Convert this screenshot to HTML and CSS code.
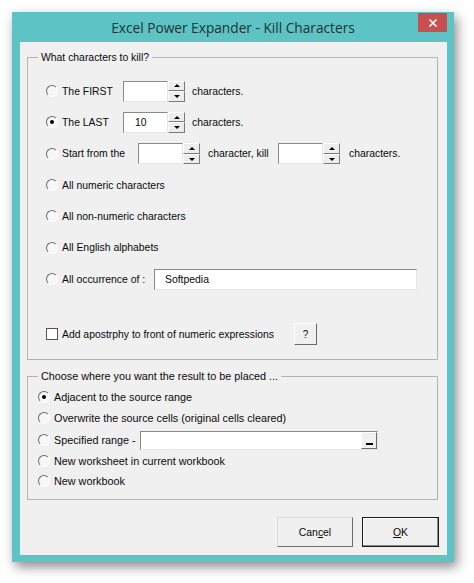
FILE: index.html
```html
<!DOCTYPE html>
<html>
<head>
<meta charset="utf-8">
<link rel="stylesheet" href="styles.css">
</head>
<body>
<div class="window">
  <div class="titlebar">
    <span class="title">Excel Power Expander - Kill Characters</span>
    <div class="close"><svg width="10" height="10" viewBox="0 0 10 10"><path d="M1.5 1.5 L8.5 8.5 M8.5 1.5 L1.5 8.5" stroke="#fff" stroke-width="1.6" fill="none"/></svg></div>
  </div>
  <div class="client">
    <div class="group g1">
      <span class="legend">What characters to kill?</span>
      <div class="row">
        <span class="radio"></span><span class="lbl w61">The FIRST</span>
        <span class="field"></span><span class="spinbtns"><span class="up"></span><span class="down"></span></span>
        <span class="after">characters.</span>
      </div>
      <div class="row">
        <span class="radio on"></span><span class="lbl w61">The LAST</span>
        <span class="field"><span class="val">10</span></span><span class="spinbtns"><span class="up"></span><span class="down"></span></span>
        <span class="after">characters.</span>
      </div>
      <div class="row">
        <span class="radio"></span><span class="lbl w76">Start from the</span>
        <span class="field"></span><span class="spinbtns"><span class="up"></span><span class="down"></span></span>
        <span class="after mid">character, kill</span>
        <span class="field"></span><span class="spinbtns"><span class="up"></span><span class="down"></span></span>
        <span class="after last">characters.</span>
      </div>
      <div class="row"><span class="radio"></span><span class="lbl">All numeric characters</span></div>
      <div class="row"><span class="radio"></span><span class="lbl">All non-numeric characters</span></div>
      <div class="row"><span class="radio"></span><span class="lbl">All English alphabets</span></div>
      <div class="row">
        <span class="radio"></span><span class="lbl w92">All occurrence of :</span>
        <span class="textbox">Softpedia</span>
      </div>
      <div class="checkrow">
        <span class="check"></span><span class="lbl w232">Add apostrphy to front of numeric expressions</span>
        <span class="qbtn">?</span>
      </div>
    </div>

    <div class="group g2">
      <span class="legend">Choose where you want the result to be placed ...</span>
      <div class="row2"><span class="radio on"></span><span class="lbl">Adjacent to the source range</span></div>
      <div class="row2 tall"><span class="radio"></span><span class="lbl">Overwrite the source cells (original cells cleared)</span></div>
      <div class="row2 tall">
        <span class="radio"></span><span class="lbl w87">Specified range -</span>
        <span class="rangebox"><span class="pick"><span class="bar"></span></span></span>
      </div>
      <div class="row2"><span class="radio"></span><span class="lbl">New worksheet in current workbook</span></div>
      <div class="row2"><span class="radio"></span><span class="lbl">New workbook</span></div>
    </div>

    <div class="buttons">
      <span class="btn">Can<u>c</u>el</span>
      <span class="btn default"><u>O</u>K</span>
    </div>
  </div>
</div>
</body>
</html>
```

FILE: styles.css
```css
html, body {
  margin: 0;
  background: #ffffff;
}
body {
  font-family: "Liberation Sans", Arial, sans-serif;
  font-size: 10.4px;
  color: #0a0a0a;
  width: 474px;
  height: 583px;
  overflow: hidden;
}
.window {
  margin: 12px 0 0 12px;
  width: 442px;
  height: 550px;
  background: #5ec3c4;
  box-shadow: 3px 5px 11px rgba(0, 0, 0, 0.45);
  display: flex;
  flex-direction: column;
}
.titlebar {
  height: 30px;
  position: relative;
  display: flex;
  align-items: center;
  justify-content: center;
  font-family: "Open Sans", "Noto Sans", sans-serif;
  font-size: 13.7px;
  color: #1d3434;
}
.title {
  margin-top: 1px;
}
.close {
  position: absolute;
  top: 1px;
  right: 7px;
  width: 29px;
  height: 19px;
  background: #c74f4f;
  display: flex;
  align-items: center;
  justify-content: center;
}
.client {
  flex: 1;
  margin: 0 7px 7px 8px;
  background: #f0f0f0;
  display: flex;
  flex-direction: column;
  padding: 15px 9px 0 7px;
}
.group {
  position: relative;
  border: 1px solid #b4b4b4;
  box-sizing: border-box;
}
.legend {
  position: absolute;
  top: -8px;
  left: 10px;
  padding: 0 3px;
  background: #f0f0f0;
  line-height: 15px;
}
.g1 {
  height: 303px;
  padding: 17.5px 0 0 18px;
}
.g2 {
  margin-top: 16px;
  height: 124px;
  padding: 10px 0 0 10px;
  font-size: 10.8px;
}
.row {
  display: flex;
  align-items: center;
  height: 31.33px;
}
.row2 {
  display: flex;
  align-items: center;
  height: 20px;
}
.row2.tall {
  height: 22px;
}
.radio {
  flex: none;
  position: relative;
  width: 12px;
  height: 12px;
  box-sizing: border-box;
  border-radius: 50%;
  border: 1px solid;
  border-color: #6a6a6a #fdfdfd #fdfdfd #6a6a6a;
  background: #f7f7f7;
  margin-right: 4px;
}
.radio.on::after {
  content: "";
  position: absolute;
  left: 3px;
  top: 3px;
  width: 4px;
  height: 4px;
  border-radius: 50%;
  background: #000;
}
.lbl {
  flex: none;
  white-space: nowrap;
}
.w61 { width: 61px; }
.w76 { width: 76px; }
.w87 { width: 86px; }
.w92 { width: 92px; }
.w232 { width: 232px; }
.field {
  flex: none;
  width: 45px;
  height: 21px;
  box-sizing: border-box;
  background: #fff;
  border: 1px solid;
  border-color: #8a8a8a #e6e6e6 #e6e6e6 #8a8a8a;
  display: flex;
  align-items: center;
}
.val {
  padding-left: 11px;
}
.spinbtns {
  flex: none;
  display: flex;
  flex-direction: column;
  width: 17px;
  height: 21px;
}
.spinbtns span {
  flex: 1;
  box-sizing: border-box;
  border: 1px solid;
  border-color: #ffffff #7a7a7a #7a7a7a #ffffff;
  background: #ededed;
  display: flex;
  align-items: center;
  justify-content: center;
}
.up::after {
  content: "";
  border-left: 3px solid transparent;
  border-right: 3px solid transparent;
  border-bottom: 3px solid #000;
}
.down::after {
  content: "";
  border-left: 3px solid transparent;
  border-right: 3px solid transparent;
  border-top: 3px solid #000;
}
.after {
  margin-left: 7px;
  white-space: nowrap;
}
.after.mid {
  margin-left: 8px;
  width: 70px;
}
.after.last {
  margin-left: 9px;
}
.textbox {
  flex: none;
  width: 263px;
  height: 21px;
  box-sizing: border-box;
  background: #fff;
  border: 1px solid;
  border-color: #8a8a8a #e6e6e6 #e6e6e6 #8a8a8a;
  padding-left: 10px;
  display: flex;
  align-items: center;
}
.checkrow {
  display: flex;
  align-items: center;
  height: 22px;
  margin-top: 28.3px;
}
.check {
  flex: none;
  width: 12px;
  height: 12px;
  box-sizing: border-box;
  border: 1px solid #555;
  background: #fff;
  margin-right: 4px;
}
.qbtn {
  flex: none;
  width: 23px;
  height: 22px;
  box-sizing: border-box;
  border: 1px solid;
  border-color: #ffffff #6b6b6b #6b6b6b #ffffff;
  background: #f0f0f0;
  display: flex;
  align-items: center;
  justify-content: center;
  font-size: 10px;
}
.rangebox {
  flex: none;
  width: 238px;
  height: 19px;
  box-sizing: border-box;
  background: #fff;
  border: 1px solid;
  border-color: #8a8a8a #e6e6e6 #e6e6e6 #8a8a8a;
  display: flex;
  justify-content: flex-end;
}
.pick {
  width: 16px;
  box-sizing: border-box;
  border: 1px solid;
  border-color: #ffffff #6b6b6b #6b6b6b #ffffff;
  background: #f0f0f0;
  display: flex;
  align-items: flex-end;
  justify-content: center;
  padding-bottom: 3px;
}
.bar {
  width: 7px;
  height: 2px;
  background: #000;
}
.buttons {
  margin-top: 17px;
  display: flex;
  justify-content: flex-end;
  gap: 9px;
  margin-right: -1px;
}
.btn {
  width: 76px;
  height: 30px;
  box-sizing: border-box;
  border: 1px solid;
  border-color: #dcdcdc #6e6e6e #6e6e6e #dcdcdc;
  background: #f0f0f0;
  display: flex;
  align-items: center;
  justify-content: center;
}
.btn.default {
  width: 77px;
  border-color: #1a1a1a;
  box-shadow: inset -1px -1px #8a8a8a, inset 1px 1px #fff;
}
```
